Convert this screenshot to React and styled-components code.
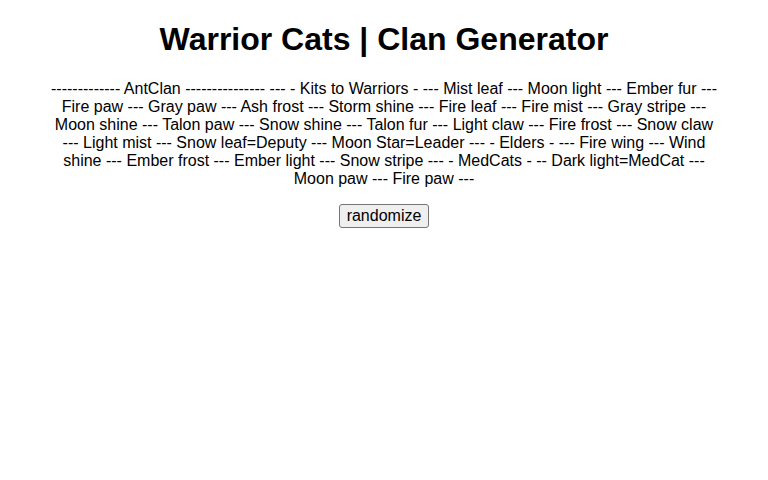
import React from 'react';
import styled, { createGlobalStyle } from 'styled-components';

const GlobalStyle = createGlobalStyle`
    body {
        margin: 0;
        background: #fff;
        font-family: "Liberation Sans", Arial, sans-serif;
        color: #000;
    }
`;

const text =
    '------------- AntClan --------------- --- - Kits to Warriors - --- Mist leaf --- Moon light --- Ember fur --- Fire paw --- Gray paw --- Ash frost --- Storm shine --- Fire leaf --- Fire mist --- Gray stripe --- Moon shine --- Talon paw --- Snow shine --- Talon fur --- Light claw --- Fire frost --- Snow claw --- Light mist --- Snow leaf=Deputy --- Moon Star=Leader --- - Elders - --- Fire wing --- Wind shine --- Ember frost --- Ember light --- Snow stripe --- - MedCats - -- Dark light=MedCat --- Moon paw --- Fire paw ---';

const Page = styled.div`
    text-align: center;
`;

const Title = styled.h1`
    font-size: 32px;
    font-weight: bold;
    margin: 21.44px 0;
    line-height: 37px;
`;

const Clan = styled.p`
    max-width: 668px;
    margin: 0 auto 16px;
    font-size: 16px;
    line-height: 18px;
`;

const Button = styled.button`
    font-family: "Liberation Sans", Arial, sans-serif;
    font-size: 16px;
    line-height: 18px;
    padding: 1px 7px;
    color: #000;
    background: #efefef;
    border: 1px solid #767676;
    border-radius: 3px;
    height: 24px;
`;

const App = () => (
    <Page>
        <GlobalStyle />
        <Title>Warrior Cats | Clan Generator</Title>
        <Clan>{text}</Clan>
        <Button>randomize</Button>
    </Page>
);

export default App;
